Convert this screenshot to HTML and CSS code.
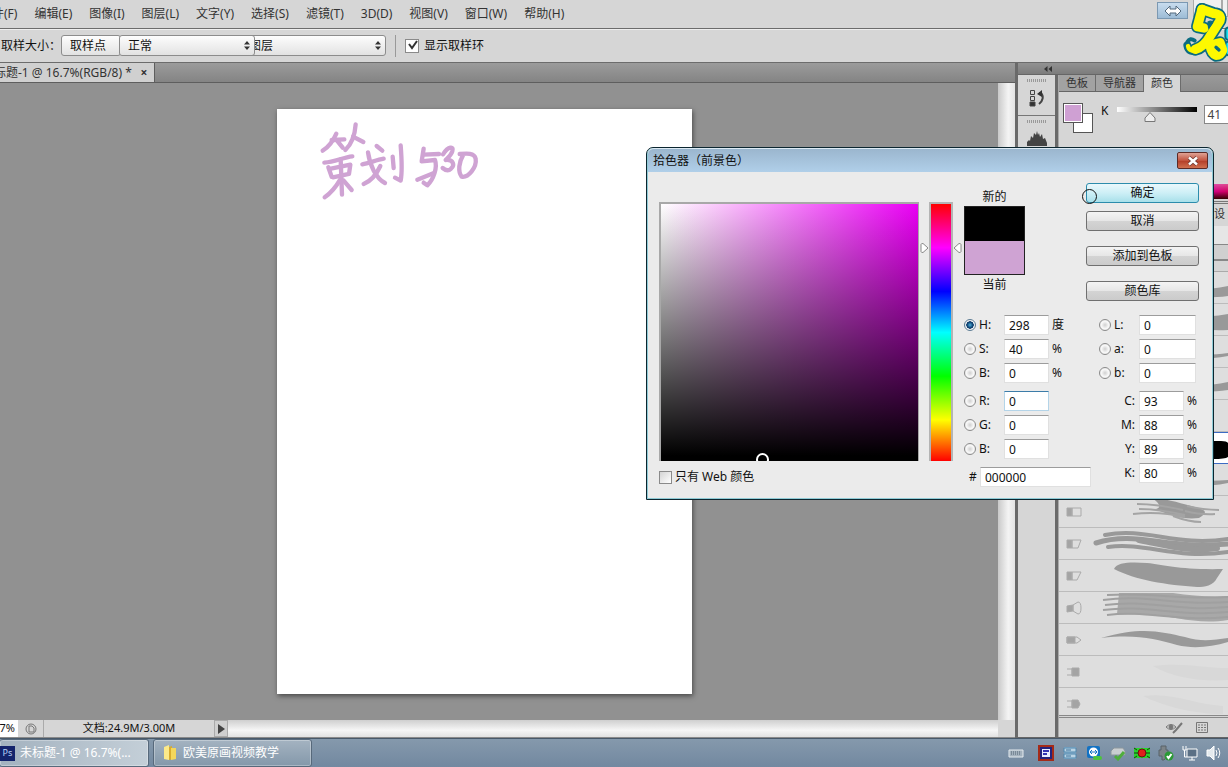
FILE: index.html
```
<!DOCTYPE html>
<html lang="zh-CN">
<head>
  <meta charset="utf-8">
  <title>未标题-1 @ 16.7%(RGB/8)</title>
  <link rel="stylesheet" href="styles.css">
</head>
<body>

  <nav class="menubar">
    <a href="#">文件(F)</a>
    <a href="#">编辑(E)</a>
    <a href="#">图像(I)</a>
    <a href="#">图层(L)</a>
    <a href="#">文字(Y)</a>
    <a href="#">选择(S)</a>
    <a href="#">滤镜(T)</a>
    <a href="#">3D(D)</a>
    <a href="#">视图(V)</a>
    <a href="#">窗口(W)</a>
    <a href="#">帮助(H)</a>
    <button class="ws-btn" aria-label="切换">
      <svg width="18" height="12" viewBox="0 0 18 12"><path d="M1 6L6 1V4H12V1L17 6L12 11V8H6V11Z" fill="#fff" stroke="#52687c"/></svg>
    </button>
    <span class="win-btns"><i></i><i></i></span>
  </nav>

  <div class="options">
    <label for="size">取样大小：</label>
    <select id="size" class="sel sel-size"><option>取样点</option></select>
    <select class="sel sel-mode" aria-label="模式"><option>正常</option></select>
    <select class="sel sel-layer" aria-label="样本"><option>所有图层</option></select>
    <span class="sep"></span>
    <input type="checkbox" id="ring" class="tick" checked>
    <label for="ring">显示取样环</label>
  </div>

  <svg class="badge" width="46" height="64" viewBox="602 0 138 192" fill="none" stroke-linecap="round" stroke-linejoin="round">
    <g stroke="#0b6c80" stroke-width="38">
      <path d="M662 28L648 80L668 84"/>
      <path d="M662 28L696 40Q722 42 716 62L688 106Q668 142 642 148"/>
      <path d="M686 136L716 128L724 150Q718 166 704 166Q690 160 686 136" />
    </g>
    <path d="M650 150Q622 160 618 136" stroke="#0b6c80" stroke-width="24"/>
    <path d="M618 126Q626 112 640 122" stroke="#0b6c80" stroke-width="12"/>
    <path d="M742 92V110M742 134V156" stroke="#0b6c80" stroke-width="26"/>
    <path d="M742 92V110M742 134V156" stroke="#17e4f5" stroke-width="14"/>
    <g stroke="#fdf900" stroke-width="28">
      <path d="M662 28L648 80L668 84"/>
      <path d="M662 28L696 40Q722 42 716 62L688 106Q668 142 642 148"/>
      <path d="M686 136L716 128L724 150Q718 166 704 166Q690 160 686 136" />
    </g>
    <path d="M650 150Q624 158 620 138" stroke="#fdf900" stroke-width="13"/>
    <path d="M680 66Q690 60 694 68L682 84Z" fill="#0b6c80" stroke="#0b6c80" stroke-width="4"/>
    <path d="M704 142L713 150" stroke="#0b6c80" stroke-width="10"/>
  </svg>

  <div class="work">
    <main class="doc">
      <div class="tabstrip">
        <div class="doctab"><span>未标题-1 @ 16.7%(RGB/8) *</span><button aria-label="关闭文档">×</button></div>
      </div>
      <div class="view">
        <div class="canvas">
          <div class="page">
            <svg viewBox="0 0 415 585" fill="none" stroke="#cfa3d3" stroke-width="13" stroke-linecap="round" stroke-linejoin="round">
              <g transform="translate(22 1) scale(.3333)">
                <path d="M112 71C102 94 88 112 71 122"/>
                <path d="M98 90L136 88M116 94L131 113"/>
                <path d="M170 43C168 72 160 100 139 120"/>
                <path d="M162 80L193 96"/>
                <path d="M76 158C108 156 132 142 160 139"/>
                <path d="M88 172L98 200M96 176L154 164L150 192L102 202"/>
                <path d="M125 148L129 254"/>
                <path d="M124 208C110 232 94 250 77 262"/>
                <path d="M134 212L158 240"/>
                <path d="M190 163C212 158 234 150 254 146"/>
                <path d="M233 108L250 122"/>
                <path d="M207 127C212 164 230 204 258 219"/>
                <path d="M244 168C232 194 214 214 194 222"/>
                <path d="M281 140L284 174"/>
                <path d="M305 106C308 144 310 186 305 212L288 203"/>
                <path d="M374 116L368 154L408 150C416 172 404 208 385 226L374 218"/>
                <path d="M374 134L420 132M355 209L403 190"/>
                <path d="M432 133C448 108 466 108 460 124C456 136 446 144 440 150C464 148 468 166 456 176C448 184 438 180 431 174"/>
                <path d="M492 136C480 156 476 184 488 200C508 204 534 172 530 146C526 128 504 130 482 132"/>
              </g>
            </svg>
          </div>
        </div>
        <div class="vscroll"></div>
      </div>
      <div class="status">
        <span class="zoomval">16.7%</span>
        <span class="sticon"><svg width="12" height="12" viewBox="0 0 12 12" fill="none" stroke="#777"><circle cx="6" cy="6" r="5"/><path d="M4 9V3H7L9 5V9Z"/></svg></span>
        <span class="docsize">文档:24.9M/3.00M</span>
        <button class="starrow" aria-label="更多"><svg width="7" height="10" viewBox="0 0 7 10"><path d="M0 0L7 5L0 10Z" fill="#444"/></svg></button>
        <span class="hscroll"></span>
        <span class="corner"></span>
      </div>
    </main>

    <aside class="side">
      <div class="sidehead"><svg width="8" height="6" viewBox="0 0 8 6"><path d="M3.500 0V6L0 3ZM8 0V6L4.500 3Z" fill="#333"/></svg></div>
      <div class="sidebody">
        <div class="icondock">
          <div class="dockitem">
            <span class="grip"></span>
            <svg width="16" height="18" viewBox="0 0 16 18" fill="none" stroke="#444"><path d="M1.500 1.500H5.500V5.500H1.500ZM1.500 7.500H5.500V11.500H1.500Z"/><path d="M1 13H6V17H1Z" fill="#333"/><path d="M10 4H12C15 7 14 12 10 15" stroke-width="2"/><path d="M8 5L13 1V8Z" fill="#333" stroke="none"/></svg>
          </div>
          <div class="dockitem">
            <span class="grip"></span>
            <svg width="20" height="16" viewBox="0 0 20 16"><path d="M0 16V12L2 10L3 11L4 6L6 8L7 3L9 5L10 1L11 5L12 3L13 7L15 4L16 9L18 8L20 13V16Z" fill="#444"/></svg>
          </div>
        </div>
        <div class="panels">
          <div class="ptabs"><a href="#">色板</a><a href="#">导航器</a><a href="#" class="on">颜色</a></div>
          <div class="colorpanel">
            <div class="krow">
              <div class="fgbg"><i class="bg"></i><i class="fg"></i></div>
              <label for="kval">K</label>
              <div class="kslider">
                <div class="kbar"></div>
                <svg width="12" height="10" viewBox="0 0 12 10"><path d="M6 .5L11 6V9.500H1V6Z" fill="#eee" stroke="#777"/></svg>
              </div>
              <input id="kval" type="text" value="41">
            </div>
            <div class="ramp"></div>
          </div>
          <div class="ptabs ptabs2"><a href="#" class="on">预设</a></div>
          <div class="brushsize"></div>
          <div class="brushgap"></div>
          <ul class="brushes">
            <li><svg class="stroke" viewBox="0 0 135 31"><path d="M10 22C60 6 90 24 135 14V24C90 30 60 14 10 22Z"/></svg></li>
            <li><svg class="stroke" viewBox="0 0 135 31"><path d="M10 16C60 6 90 18 135 10V26C90 28 60 14 10 16Z"/></svg></li>
            <li><svg class="stroke" viewBox="0 0 135 31"><path d="M10 16C60 6 90 24 135 17V20C90 28 60 14 10 16Z"/></svg></li>
            <li><svg class="stroke" viewBox="0 0 135 31"><path d="M10 16C60 6 90 24 135 14V22C90 28 60 14 10 16Z"/></svg></li>
            <li></li>
            <li class="picked"><svg class="stroke" viewBox="0 0 135 31"><path d="M10 8H128Q134 8 135 10V24Q132 26 120 26H10Z"/></svg></li>
            <li><svg class="stroke" viewBox="0 0 135 31"><path d="M10 16C60 6 90 20 135 16V19C90 28 60 14 10 16Z"/></svg></li>
            <li>
              <svg class="tip" viewBox="0 0 16 10"><path d="M1 1H6V9H1Z" class="f"/><path d="M6 1H15V9H6Z"/></svg>
              <svg class="stroke" viewBox="0 0 135 31"><path d="M56 0C72 3 84 6 98 10C110 13 118 15 106 22C88 24 74 18 62 13C70 12 66 6 56 0Z"/><path d="M44 8Q64 8 90 14M46 13Q66 13 92 19M40 18Q66 15 92 21M94 10Q110 14 126 14M92 15Q108 19 122 18M80 20Q96 26 108 26" fill="none" stroke="#a4a4a4" stroke-width="2"/></svg>
            </li>
            <li>
              <svg class="tip" viewBox="0 0 16 10"><path d="M1 1H6V9H1Z" class="f"/><path d="M6 1H15L12 9H6Z"/></svg>
              <svg class="stroke" viewBox="0 0 135 31"><g fill="none" stroke="#999" stroke-linecap="round"><path d="M12 7C54 -1 82 19 135 11" stroke-width="4"/><path d="M3 15C44 2 74 22 135 16" stroke-width="5"/><path d="M15 19C54 14 82 32 135 24" stroke-width="4"/><path d="M46 12C74 17 92 24 124 20" stroke-width="6"/></g></svg>
            </li>
            <li>
              <svg class="tip" viewBox="0 0 16 10"><path d="M1 1H6V9H1Z" class="f"/><path d="M6 1H15L11 9H6Z"/></svg>
              <svg class="stroke" viewBox="0 0 135 31"><path d="M21 9C24 2 38 2 54 3C72 5 88 10 130 9L124 18C120 26 112 27 104 27C74 25 42 20 21 9Z"/></svg>
            </li>
            <li>
              <svg class="tip tall" viewBox="0 0 16 14"><path d="M1 5L7 4V10L1 11Z" class="f"/><path d="M7 4L12 1Q15 1 15 7T12 13L7 10Z"/></svg>
              <svg class="stroke" viewBox="0 0 135 31"><path d="M26 1H80C100 4 118 5 135 4V28C104 33 80 24 60 23L24 22Z" fill="#a8a8a8"/><g fill="none" stroke="#a0a0a0" stroke-width="2"><path d="M14 3C60 0 82 8 135 5M10 8C54 2 82 14 135 10M12 13C54 7 82 20 135 15M10 18C54 12 82 25 135 20M14 23C54 18 82 30 135 25"/></g></svg>
            </li>
            <li>
              <svg class="tip" viewBox="0 0 16 10"><path d="M1 2H9V8H1Z" class="f"/><path d="M1 2H11L15 5L11 8H1Z"/></svg>
              <svg class="stroke" viewBox="0 0 135 31"><path d="M8 14C50 2 68 8 92 13C108 18 120 16 135 14V18C118 23 100 25 84 21C62 15 44 10 8 14Z"/></svg>
            </li>
            <li>
              <svg class="tip" viewBox="0 0 16 10"><path d="M6 1H13V9H6Z" class="f"/><path d="M1 2H6V8H1"/></svg>
              <svg class="stroke faint" viewBox="0 0 135 31"><path d="M60 10C90 6 110 12 135 12V24C110 26 80 22 60 10Z"/></svg>
            </li>
            <li>
              <svg class="tip" viewBox="0 0 16 10"><path d="M6 1H12L14 5L12 9H6Z" class="f"/><path d="M1 2H6V8H1"/></svg>
              <svg class="stroke faint" viewBox="0 0 135 31"><path d="M50 8C80 4 100 16 130 18V26C100 26 70 18 50 8Z"/></svg>
            </li>
          </ul>
          <div class="pfoot">
            <svg width="18" height="12" viewBox="0 0 18 12" fill="none" stroke="#777"><path d="M1 5Q6 0 11 5Q6 10 1 5Z"/><circle cx="6" cy="5" r="2" fill="#777"/><path d="M17 1L11 8L8 11" stroke-width="2"/></svg>
            <svg width="12" height="11" viewBox="0 0 12 11" fill="none" stroke="#777"><path d="M.5 .5H11.500V10.500H.5Z"/><path d="M2 3H10M2 5.500H10M2 8H10" stroke-dasharray="2 1"/></svg>
          </div>
        </div>
      </div>
    </aside>
  </div>

  <footer class="taskbar">
    <button class="task active"><span class="ps">Ps</span>未标题-1 @ 16.7%(...</button>
    <button class="task"><svg width="14" height="16" viewBox="0 0 14 16"><path d="M1 2L6 0V15L1 14Z" fill="#fbe98a"/><path d="M6 2L9 1V14L6 15Z" fill="#d8ac2e"/><path d="M8 3H13V14L8 15Z" fill="#f4d75b"/></svg>欧美原画视频教学</button>
    <div class="tray">
      <svg viewBox="0 0 16 16"><path d="M1 5H15V12H1Z" fill="#a4b2be" stroke="#e4eaee"/><path d="M3 7H13M3 9H13" stroke="#4e6070" stroke-dasharray="1 1"/></svg>
      <svg viewBox="0 0 16 16"><path d="M1 1H15V15H1Z" fill="#fff" stroke="#a42a18" stroke-width="2"/><path d="M3 3H13V13H3Z" fill="#e9ecff" stroke="#24227c" stroke-width="2"/><path d="M5 6H11M5 9H9" stroke="#3434b4" stroke-width="2"/></svg>
      <svg viewBox="0 0 16 16"><path d="M2 2H14V14H2Z" fill="#8db4d0"/><path d="M2 3H14V7H2ZM2 9H14V13H2Z" fill="#b9d3e4" stroke="#4e86ac"/><path d="M4 5H9M4 11H9" stroke="#3a7099"/></svg>
      <svg viewBox="0 0 16 16"><rect x="1" y="1" width="13" height="12" rx="2" fill="#1272c4"/><circle cx="7.500" cy="7" r="4.500" fill="#fff"/><path d="M4 7H11M6 5L4 7L6 9M9 5L11 7L9 9" stroke="#1272c4" fill="none"/><rect x="7" y="11" width="9" height="4" rx="2" fill="#4cc43c"/></svg>
      <svg viewBox="0 0 16 16"><path d="M1 6L4 3H13L15 6V10H1Z" fill="#c9ced0" stroke="#8c969c"/><path d="M5 11L8 14L14 7" fill="none" stroke="#4fae3c" stroke-width="3"/></svg>
      <svg viewBox="0 0 16 16"><path d="M0 3H16V13H0Z" fill="#27d42b"/><path d="M0 3L3 5M16 3L13 5M0 13L3 11M16 13L13 11M0 8H16" stroke="#1c3c14"/><circle cx="8" cy="8" r="4" fill="#e0201c" stroke="#6b1010"/></svg>
      <svg viewBox="0 0 16 16"><path d="M3 1H8V5H10V10L6 15H4V11H1V5H3Z" fill="#7d8488" stroke="#596268"/><circle cx="11" cy="11" r="4.500" fill="#2b9a34"/><path d="M9 11L10.500 13L13.500 9" stroke="#fff" stroke-width="2" fill="none"/></svg>
      <svg viewBox="0 0 16 16"><path d="M5 4H15V12H5Z" fill="#5b7085" stroke="#fff"/><path d="M7 15H13M10 12V15" stroke="#fff"/><path d="M1 1V5H4V1M2.500 5V12H5" fill="none" stroke="#fff"/></svg>
      <svg viewBox="0 0 16 16" fill="none" stroke="#fff"><path d="M1 5H4L8 1V15L4 11H1Z" fill="#e4eaee"/><path d="M10 5Q12 8 10 11M12 3Q15.500 8 12 13"/></svg>
    </div>
  </footer>

  <section class="dialog" role="dialog" aria-labelledby="dlgtitle">
    <header class="dlghead">
      <span id="dlgtitle">拾色器（前景色）</span>
      <button aria-label="关闭"><svg width="12" height="10" viewBox="0 0 12 10"><path d="M2 1.500L10 8.500M10 1.500L2 8.500" stroke="#6b3730" stroke-width="4"/><path d="M2 1.500L10 8.500M10 1.500L2 8.500" stroke="#fff" stroke-width="2.500"/></svg></button>
    </header>
    <form class="dlgbody">
      <div class="fieldcol">
        <div class="field"><span class="marker"></span></div>
        <div class="web"><input type="checkbox" id="web" class="tick"><label for="web">只有 Web 颜色</label></div>
      </div>
      <div class="hue">
        <svg width="9" height="12" viewBox="0 0 9 12"><path d="M1 2.500Q1 1.500 3 1.500L8 6L3 10.500Q1 10.500 1 9.500Z" fill="#fff" stroke="#888"/></svg>
        <div class="huebar"></div>
        <svg width="9" height="12" viewBox="0 0 9 12"><path d="M8 2.500Q8 1.500 6 1.500L1 6L6 10.500Q8 10.500 8 9.500Z" fill="#fff" stroke="#888"/></svg>
      </div>
      <div class="right">
        <div class="top">
          <div class="swatches"><span>新的</span><div class="pair"><i></i></div><span>当前</span></div>
          <div class="btns">
            <button type="button" class="ok">确定</button>
            <button type="button">取消</button>
            <button type="button" class="apart">添加到色板</button>
            <button type="button" class="apart">颜色库</button>
            <span class="cursor"></span>
          </div>
        </div>
        <div class="values">
          <div class="vcol">
            <div class="row"><input type="radio" name="ch" id="rh" checked><label for="rh">H:</label><input type="text" value="298" aria-label="H"><span>度</span></div>
            <div class="row"><input type="radio" name="ch" id="rs"><label for="rs">S:</label><input type="text" value="40" aria-label="S"><span>%</span></div>
            <div class="row"><input type="radio" name="ch" id="rv"><label for="rv">B:</label><input type="text" value="0" aria-label="B"><span>%</span></div>
            <div class="row next"><input type="radio" name="ch" id="rr"><label for="rr">R:</label><input type="text" class="focus" value="0" aria-label="R"></div>
            <div class="row"><input type="radio" name="ch" id="rg"><label for="rg">G:</label><input type="text" value="0" aria-label="G"></div>
            <div class="row"><input type="radio" name="ch" id="rb"><label for="rb">B:</label><input type="text" value="0" aria-label="B"></div>
            <div class="row hex next"><label for="hex">#</label><input type="text" id="hex" value="000000"></div>
          </div>
          <div class="vcol lab">
            <div class="row"><input type="radio" name="ch" id="rl"><label for="rl">L:</label><input type="text" class="wide" value="0" aria-label="L"></div>
            <div class="row"><input type="radio" name="ch" id="ra"><label for="ra">a:</label><input type="text" class="wide" value="0" aria-label="a"></div>
            <div class="row"><input type="radio" name="ch" id="rbb"><label for="rbb">b:</label><input type="text" class="wide" value="0" aria-label="b"></div>
            <div class="row cmyk next"><label for="c">C:</label><input type="text" id="c" value="93"><span>%</span></div>
            <div class="row cmyk"><label for="m">M:</label><input type="text" id="m" value="88"><span>%</span></div>
            <div class="row cmyk"><label for="y">Y:</label><input type="text" id="y" value="89"><span>%</span></div>
            <div class="row cmyk"><label for="k">K:</label><input type="text" id="k" value="80"><span>%</span></div>
          </div>
        </div>
      </div>
    </form>
  </section>

</body>
</html>
```

FILE: styles.css
```
* {
  box-sizing: border-box;
}

body {
  margin: 0;
  height: 100vh;
  display: flex;
  flex-direction: column;
  overflow: hidden;
  position: relative;
  background: #d6d6d6;
  color: #111;
  font-family: "Noto Sans", "Noto Sans CJK SC", sans-serif;
  font-size: 12px;
  line-height: 16px;
}

button, input, select {
  font: inherit;
  color: inherit;
  margin: 0;
  padding: 0;
}

a {
  color: inherit;
  text-decoration: none;
}

svg {
  display: block;
  flex: none;
}

/* menu */
.menubar {
  display: flex;
  align-items: center;
  gap: 17px;
  height: 29px;
  flex: none;
  margin-left: -20px;
  border-bottom: 1px solid #6c6c6c;
  color: #333;
  white-space: nowrap;
}

.ws-btn {
  align-self: flex-start;
  margin-top: 2px;
  margin-left: auto;
  width: 31px;
  height: 17px;
  display: flex;
  align-items: center;
  justify-content: center;
  border: 1px solid #7b98b2;
  background: linear-gradient(#c8dcee, #9dbcd6);
}

.win-btns {
  align-self: flex-start;
  display: flex;
  margin-left: -12px;
}

.win-btns i {
  width: 29px;
  height: 17px;
  border: 1px solid #aaa;
  border-top: 0;
  background: #f0f0f0;
}

.win-btns i + i {
  width: 6px;
}

.badge {
  position: absolute;
  right: 0;
  top: 0;
  z-index: 3;
}

/* options bar */
.options {
  display: flex;
  align-items: center;
  height: 34px;
  flex: none;
  padding-left: 1px;
  padding-bottom: 1px;
  border-top: 1px solid #eee;
  border-bottom: 1px solid #6c6c6c;
}

.options label {
  white-space: nowrap;
}

.sel {
  appearance: none;
  height: 21px;
  padding: 0 8px;
  border: 1px solid #8c8c8c;
  border-radius: 3px;
  background: linear-gradient(#fdfdfd, #e2e2e2);
}

.sel-mode, .sel-layer {
  background: url("data:image/svg+xml,%3Csvg xmlns='http://www.w3.org/2000/svg' width='6' height='9'%3E%3Cpath d='M3 0L6 3.500H0ZM3 9L0 5.500H6Z' fill='%23333'/%3E%3C/svg%3E") no-repeat right 4px center, linear-gradient(#fdfdfd, #e2e2e2);
}

.sel-size {
  width: 60px;
}

.sel-mode {
  width: 136px;
  margin-left: -2px;
  position: relative;
  z-index: 1;
}

.sel-layer {
  width: 170px;
  margin-left: -39px;
}

.sep {
  width: 1px;
  height: 22px;
  margin: 0 9px;
  background: #999;
}

.tick {
  appearance: none;
  width: 13px;
  height: 13px;
  flex: none;
  border: 1px solid #8a8a8a;
  background: linear-gradient(135deg, #d4d4d4, #fff);
}

.tick:checked {
  background: #fff url("data:image/svg+xml,%3Csvg xmlns='http://www.w3.org/2000/svg' width='11' height='11'%3E%3Cpath d='M2 4L5 8L10 1' fill='none' stroke='%23333' stroke-width='2'/%3E%3C/svg%3E") center no-repeat;
}

.options .tick {
  width: 14px;
  height: 14px;
  margin-right: 5px;
}

/* document */
.work {
  flex: 1;
  min-height: 0;
  display: flex;
}

.doc {
  flex: 1;
  min-width: 0;
  display: flex;
  flex-direction: column;
}

.tabstrip {
  height: 20px;
  flex: none;
  display: flex;
  background: linear-gradient(#9b9b9b, #848484);
  border-bottom: 1px solid #5e5e5e;
}

.doctab {
  display: flex;
  align-items: center;
  gap: 6px;
  margin-left: -18px;
  padding-right: 4px;
  background: #d0d0d0;
  border-right: 1px solid #5e5e5e;
  color: #333;
  white-space: nowrap;
}

.doctab button {
  border: 0;
  width: 12px;
  background: none;
  font-weight: bold;
}

.view {
  flex: 1;
  min-height: 0;
  display: flex;
}

.canvas {
  flex: 1;
  min-width: 0;
  display: flex;
  justify-content: center;
  padding: 26px 29px 26px 0;
  background: #919191;
}

.page {
  height: 100%;
  aspect-ratio: 415 / 585;
  background: #fff;
  box-shadow: 1px 2px 5px rgba(0, 0, 0, .5);
}

.page svg {
  width: 100%;
  height: 100%;
}

.vscroll {
  width: 17px;
  background: linear-gradient(to right, #c9c9c9, #f4f4f4 60%, #e4e4e4);
}

.status {
  height: 18px;
  flex: none;
  display: flex;
  align-items: center;
  border-bottom: 1px solid #8a8a8a;
  font-size: 11px;
  white-space: nowrap;
}

.status > * {
  height: 100%;
}

.zoomval {
  width: 18px;
  display: flex;
  justify-content: flex-end;
  padding-right: 3px;
  background: #fff;
  overflow: hidden;
}

.sticon {
  width: 26px;
  display: flex;
  align-items: center;
  justify-content: center;
  border-right: 1px solid #aaa;
}

.docsize {
  width: 170px;
  text-align: center;
}

.starrow {
  width: 14px;
  display: flex;
  align-items: center;
  justify-content: center;
  border: 1px solid #aaa;
  background: #d0d0d0;
}

.hscroll {
  flex: 1;
  background: linear-gradient(#cfcfcf, #f6f6f6 60%, #e2e2e2);
}

.corner {
  width: 17px;
}

/* right side */
.side {
  width: 213px;
  flex: none;
  display: flex;
  flex-direction: column;
  border-left: 3px solid #6a6a6a;
}

.sidehead {
  height: 12px;
  flex: none;
  padding: 3px 0 0 26px;
  background: linear-gradient(#929292, #7c7c7c);
  border-bottom: 1px solid #666;
}

.sidebody {
  flex: 1;
  min-height: 0;
  display: flex;
  border-bottom: 1px solid #666;
}

.icondock {
  width: 40px;
  flex: none;
  border-right: 3px solid #6a6a6a;
}

.dockitem {
  height: 41px;
  display: flex;
  flex-direction: column;
  align-items: center;
  gap: 7px;
  padding-top: 4px;
  border-bottom: 1px solid #777;
}

.dockitem + .dockitem {
  border: 0;
}

.grip {
  width: 20px;
  height: 3px;
  background: repeating-linear-gradient(to right, #999 0 1px, #d6d6d6 1px 2px);
}

.panels {
  flex: 1;
  min-width: 0;
  display: flex;
  flex-direction: column;
  overflow: hidden;
  border-left: 1px solid #aaa;
}

.ptabs {
  height: 17px;
  flex: none;
  display: flex;
  background: linear-gradient(#9a9a9a, #8c8c8c);
  border-bottom: 1px solid #666;
  color: #333;
  font-size: 11px;
  white-space: nowrap;
}

.ptabs a {
  padding: 0 7px;
  background: #a2a2a2;
  border-right: 1px solid #6c6c6c;
}

.ptabs .on {
  background: #d6d6d6;
  margin-bottom: -1px;
}

.colorpanel {
  height: 112px;
  flex: none;
  padding-top: 11px;
  border-bottom: 3px double #777;
}

.krow {
  display: flex;
  align-items: flex-start;
  padding-left: 4px;
  height: 81px;
}

.fgbg {
  display: grid;
  flex: none;
  width: 30px;
  height: 30px;
  margin-right: 8px;
}

.fgbg i {
  grid-area: 1 / 1;
  width: 20px;
  height: 20px;
  background: #fff;
  border: 1px solid #555;
}

.fgbg .bg {
  place-self: end;
}

.fgbg .fg {
  background: #cfa0d3;
  box-shadow: inset 0 0 0 1px #fff;
}

.kslider {
  width: 80px;
  flex: none;
  margin: 4px 7px 0 9px;
}

.kbar {
  height: 5px;
  background: linear-gradient(to right, #fff, #000);
}

.kslider svg {
  margin: 0 auto 0 27px;
}

.krow input {
  width: 32px;
  height: 19px;
  flex: none;
  margin-top: 2px;
  padding-left: 2px;
  border: 1px solid #888;
  background: #fff;
  color: #444;
}

.ramp {
  height: 15px;
  background: linear-gradient(rgba(255, 255, 255, .3), transparent, #300), linear-gradient(to right, red, #ff0, lime, cyan, blue, #d00080 92%, #d00060);
}

.ptabs2 {
  height: 22px;
  line-height: 20px;
  justify-content: flex-end;
}

.ptabs2 .on {
  margin-right: -5px;
}

.brushsize {
  height: 33px;
  flex: none;
  background: linear-gradient(#e6e6e6 18px, #888 18px 19px, #d0d0d0 19px);
}

.brushgap {
  height: 12px;
  flex: none;
  border-top: 2px solid #888;
}

.brushes {
  flex: 1;
  min-height: 0;
  overflow: hidden;
  margin: 0;
  padding: 0;
  list-style: none;
  background: #dedede;
  border-top: 1px solid #aaa;
}

.brushes li {
  height: 32px;
  display: flex;
  align-items: center;
  justify-content: flex-end;
  padding-left: 7px;
  border-bottom: 1px solid #bcbcbc;
}

.brushes .picked {
  background: #fff;
  border-top: 1px solid #3c6cc4;
  border-bottom: 1px solid #3c6cc4;
}

.stroke {
  width: 135px;
  height: 31px;
  fill: #999;
}

.picked .stroke {
  fill: #000;
}

.faint {
  fill: #d8d8d8;
}

.tip {
  width: 16px;
  height: 10px;
  margin-right: auto;
  fill: none;
  stroke: #aaa;
}

.tall {
  height: 14px;
}

.tip .f {
  fill: #a4a4a4;
}

.pfoot {
  height: 22px;
  flex: none;
  display: flex;
  align-items: center;
  justify-content: flex-end;
  gap: 13px;
  padding-right: 20px;
  border-top: 3px double #888;
}

/* windows taskbar */
.taskbar {
  height: 29px;
  flex: none;
  display: flex;
  gap: 4px;
  border-top: 1px solid #48596a;
  background: linear-gradient(#8599ac, #7288a0);
}

.task {
  width: 159px;
  display: flex;
  align-items: center;
  gap: 6px;
  padding-left: 9px;
  border: 1px solid #57697b;
  border-radius: 3px;
  background: linear-gradient(#a4b3c1, #8498aa);
  box-shadow: inset 0 0 0 1px rgba(255, 255, 255, .3);
  color: #fff;
  white-space: nowrap;
}

.task.active {
  width: 149px;
  padding-left: 0;
  border-left: 0;
  gap: 5px;
  background: linear-gradient(to right, #a3b2bf, #c4cfd8);
}

.ps {
  width: 15px;
  height: 15px;
  line-height: 14px;
  font-size: 9px;
  background: #14246c;
  color: #b4d0f8;
}

.tray {
  flex: 1;
  display: flex;
  align-items: center;
  justify-content: flex-end;
  gap: 8px;
  padding-right: 6px;
}

.tray svg {
  width: 16px;
  height: 16px;
}

.tray svg:first-child {
  margin-right: 6px;
}

/* color picker window */
.dialog {
  position: absolute;
  z-index: 5;
  top: 147px;
  right: 14px;
  width: 568px;
  border: 1px solid #0c2630;
  border-radius: 7px 7px 0 0;
  background: #ebebeb;
  box-shadow: inset 0 0 0 1px #8fcbd6;
}

.dlghead {
  height: 24px;
  display: flex;
  justify-content: space-between;
  align-items: center;
  margin: 0 1px;
  padding: 0 4px 0 5px;
  border-top: 1px solid #dceaf4;
  border-radius: 6px 6px 0 0;
  background: linear-gradient(#9bb6ce, #b0cfe9);
}

.dlghead button {
  width: 31px;
  height: 17px;
  display: flex;
  align-items: center;
  justify-content: center;
  border: 1px solid #5c2a26;
  border-radius: 2px;
  background: linear-gradient(#dfa295, #c2543f 50%, #b23b26 50%, #d07050);
}

.dlgbody {
  display: flex;
  align-items: flex-start;
  padding: 11px 13px 10px 12px;
}

.fieldcol {
  flex: 1;
  margin-top: 19px;
}

.field {
  height: 259px;
  position: relative;
  overflow: hidden;
  border: 2px solid #a8a8a8;
  border-width: 2px 1px 0 2px;
  background: linear-gradient(transparent, #000 98%), linear-gradient(to right, #fff, #ea00f4);
}

.marker {
  position: absolute;
  left: 95px;
  bottom: -5px;
  width: 13px;
  height: 13px;
  border: 2px solid #fff;
  border-radius: 50%;
}

.web {
  display: flex;
  align-items: center;
  gap: 3px;
  margin-top: 8px;
}

.hue {
  display: flex;
  align-items: flex-start;
  margin: 19px 2px 0 1px;
}

.hue svg {
  margin-top: 40px;
}

.huebar {
  width: 24px;
  height: 259px;
  border: 2px solid #b4b4b4;
  border-bottom: 0;
  background: linear-gradient(red, #f0f 17%, blue 34%, cyan 50%, lime 67%, #ff0 84%, red);
}

.right {
  width: 236px;
}

.top {
  display: flex;
  justify-content: space-between;
  padding-right: 1px;
}

.swatches {
  width: 61px;
  padding-top: 6px;
  text-align: center;
}

.swatches span {
  display: block;
}

.pair {
  height: 69px;
  margin: 1px 0 2px;
  border: 1px solid #222;
  background: #cfa3d3;
}

.pair i {
  display: block;
  height: 50%;
  background: #000;
}

.btns {
  width: 113px;
  position: relative;
  display: flex;
  flex-direction: column;
  gap: 8px;
}

.btns button {
  height: 20px;
  line-height: 18px;
  border: 1px solid #707070;
  border-radius: 3px;
  background: linear-gradient(#f4f4f4, #e6e6e6 50%, #d4d4d4 50%, #cbcbcb);
}

.btns .apart {
  margin-top: 7px;
}

.btns .ok {
  border-color: #2c8cac;
  background: linear-gradient(#eaf8fc, #cdeff6 50%, #a8e0ea);
}

.cursor {
  position: absolute;
  left: -4px;
  top: 6px;
  width: 15px;
  height: 15px;
  border: 1px solid #111;
  border-radius: 50%;
}

.values {
  display: flex;
  justify-content: space-between;
  margin-top: 12px;
}

.row {
  height: 24px;
  display: flex;
  align-items: center;
}

.next {
  margin-top: 4px;
}

.row label {
  width: 28px;
  padding-left: 3px;
}

.row span {
  padding-left: 3px;
}

.row input[type="text"] {
  width: 45px;
  height: 20px;
  padding-left: 4px;
  border: 1px solid #e0e0e0;
  border-top-color: #9c9c9c;
  background: #fff;
}

.row .focus[type="text"] {
  border-color: #b4d4e8;
  border-top-color: #3c7ca8;
}

.row input[type="radio"] {
  appearance: none;
  width: 12px;
  height: 12px;
  border: 1px solid #8a8a8a;
  border-radius: 50%;
  background: radial-gradient(#d0d0d0, #fff 60%);
  box-shadow: inset 0 0 0 1px #eee;
}

.row input[type="radio"]:checked {
  border-color: #5c7c94;
  background: radial-gradient(circle closest-side, #4cb0dc, #0c3c6c 60%, #0c3c6c 70%, #fff 80%);
}

.hex {
  padding-left: 2px;
}

.row.hex label {
  width: 14px;
}

.row.hex input[type="text"] {
  width: 111px;
}

.lab {
  width: 101px;
}

.lab .row label {
  width: 28px;
}

.row .wide[type="text"] {
  width: 57px;
}

.lab .cmyk label {
  width: 40px;
  padding: 0 4px 0 0;
  text-align: right;
}
```
